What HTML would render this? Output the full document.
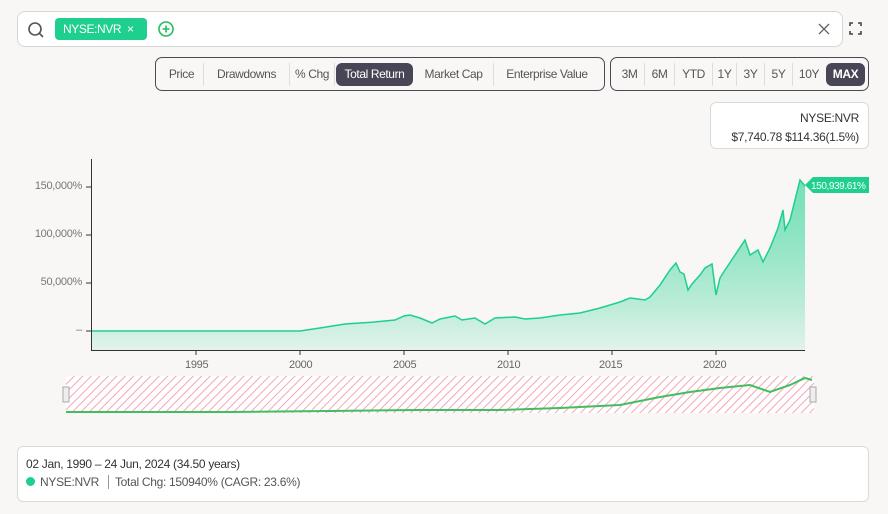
<!DOCTYPE html>
<html><head><meta charset="utf-8"><style>
*{box-sizing:border-box;margin:0;padding:0}
body{width:888px;height:514px;background:#f8f7f5;font-family:"Liberation Sans",sans-serif;position:relative;overflow:hidden;color:#333}
.search{position:absolute;left:17px;top:11px;width:826px;height:36px;background:#fff;border:1px solid #d8d6d2;border-radius:8px}
.chip{position:absolute;left:37px;top:6px;height:22px;width:92px;background:#1ecf8e;border-radius:4px;color:#fff;font-size:12px;letter-spacing:-.4px;line-height:22px;padding-left:8px;white-space:nowrap}
.grp{position:absolute;top:57px;height:34px;border:1px solid #4a4a55;border-radius:7px;font-size:12px;letter-spacing:-.4px;color:#555}
.grp span{position:absolute;top:5px;height:23px;line-height:23px;text-align:center;border-right:1px solid #ddd;white-space:nowrap}
.grp .on{background:#484656;color:#fff;border-radius:6px;border:none}
.tip{position:absolute;left:710px;top:102px;width:159px;height:47px;background:#fff;border:1px solid #dcdad6;border-radius:6px;text-align:right;padding:6px 9px;font-size:12px;letter-spacing:-.3px;line-height:19px;color:#333;white-space:nowrap}
.ylab{position:absolute;right:806px;font-size:11px;letter-spacing:-.3px;color:#777}
.xlab{position:absolute;top:359px;font-size:11px;color:#666;letter-spacing:-.3px}
.foot{position:absolute;left:17px;top:446px;width:852px;height:56px;background:#fff;border:1px solid #dcdad6;border-radius:6px;font-size:12px;letter-spacing:-.3px;padding:10px 8px;color:#333}
</style></head><body>
<div class="search">
<svg style="position:absolute;left:9px;top:9px" width="18" height="18" viewBox="0 0 18 18"><circle cx="8" cy="8" r="6" fill="none" stroke="#555" stroke-width="1.6"/><line x1="12.5" y1="12.5" x2="16" y2="16" stroke="#555" stroke-width="1.6"/></svg>
<div class="chip">NYSE:NVR &nbsp;×</div>
<svg style="position:absolute;left:139px;top:8px" width="18" height="18" viewBox="0 0 18 18"><circle cx="9" cy="9" r="7" fill="none" stroke="#1fbf5f" stroke-width="1.6"/><path d="M9 5.5v7M5.5 9h7" stroke="#1fbf5f" stroke-width="1.6"/></svg>
<svg style="position:absolute;right:12px;top:11px" width="12" height="12" viewBox="0 0 12 12"><path d="M1 1l10 10M11 1L1 11" stroke="#666" stroke-width="1.3"/></svg>
</div>
<svg style="position:absolute;left:849px;top:22px" width="13" height="13" viewBox="0 0 13 13"><path d="M1 4V1h3M9 1h3v3M12 9v3H9M4 12H1V9" fill="none" stroke="#444" stroke-width="1.6"/></svg>
<div class="grp" style="left:155px;width:450px">
<span style="left:4px;width:44px">Price</span><span style="left:48px;width:86px">Drawdowns</span><span style="left:134px;width:45px">% Chg</span><span class="on" style="left:180px;width:77px">Total Return</span><span style="left:258px;width:80px">Market Cap</span><span style="left:338px;width:106px;border:none">Enterprise Value</span></div>
<div class="grp" style="left:610px;width:259px">
<span style="left:4px;width:30px">3M</span><span style="left:34px;width:30px">6M</span><span style="left:64px;width:38px">YTD</span><span style="left:102px;width:24px">1Y</span><span style="left:126px;width:28px">3Y</span><span style="left:154px;width:28px">5Y</span><span style="left:182px;width:32px;border:none">10Y</span><span class="on" style="left:215px;width:39px;font-weight:bold">MAX</span></div>
<div class="tip">NYSE:NVR<br>$7,740.78 $114.36(1.5%)</div>
<div class="ylab" style="top:180px">150,000%</div>
<div class="ylab" style="top:228px">100,000%</div>
<div class="ylab" style="top:276px">50,000%</div>
<div class="ylab" style="top:324px">–</div>
<div class="xlab" style="left:185px">1995</div><div class="xlab" style="left:289px">2000</div><div class="xlab" style="left:393px">2005</div><div class="xlab" style="left:497px">2010</div><div class="xlab" style="left:599px">2015</div><div class="xlab" style="left:703px">2020</div>
<svg style="position:absolute;left:0;top:0" width="888" height="514">
<defs><linearGradient id="g" x1="0" y1="0" x2="0" y2="1"><stop offset="0" stop-color="#5dddab" stop-opacity=".85"/><stop offset="1" stop-color="#1ecf8e" stop-opacity=".1"/></linearGradient>
<pattern id="h" width="6" height="6" patternUnits="userSpaceOnUse" patternTransform="rotate(45)"><rect width="6" height="6" fill="#fff"/><line x1="0" y1="0" x2="0" y2="6" stroke="#f4a6b8" stroke-width="2"/></pattern></defs>
<path id="ln" d="M92 331L300 331L320 328L345 324L375 322L395 320L404 316L410 315L420 318L432 323L440 319L455 316L462 320L475 318L485 324L495 318L515 317L525 319L540 318L560 315L580 313L600 308L620 302L630 298L645 300L650 297L660 285L670 270L676 263L680 272L684 274L688 290L692 284L700 275L705 268L712 264L716 295L720 278L725 270L735 255L745 240L750 255L758 250L763 262L770 248L778 228L783 210L785 230L790 220L796 196L800 180L805 186L805 350L92 350Z" fill="url(#g)"/>
<path d="M92 331L300 331L320 328L345 324L375 322L395 320L404 316L410 315L420 318L432 323L440 319L455 316L462 320L475 318L485 324L495 318L515 317L525 319L540 318L560 315L580 313L600 308L620 302L630 298L645 300L650 297L660 285L670 270L676 263L680 272L684 274L688 290L692 284L700 275L705 268L712 264L716 295L720 278L725 270L735 255L745 240L750 255L758 250L763 262L770 248L778 228L783 210L785 230L790 220L796 196L800 180L805 186" fill="none" stroke="#1ecf8e" stroke-width="1.5"/>
<path d="M91.5 159V350.5H805" fill="none" stroke="#333" stroke-width="1"/>
<path d="M86 187h5M86 235h5M86 283h5M86 331h5M196 350v5M300 350v5M404 350v5M508 350v5M612 350v5M716 350v5" stroke="#333"/>
<path d="M805 185L813 177H869V193H813Z" fill="#1ecf8e"/>
<text x="811" y="189" font-size="10" letter-spacing="-0.4" fill="#fff" font-family="Liberation Sans">150,939.61%</text>
<rect x="66" y="376" width="748" height="37" fill="url(#h)"/>
<path d="M66 412L230 412L330 411L420 410L500 410L560 408L620 405L660 397L690 392L720 388L750 385L770 392L790 385L805 378L812 380" fill="none" stroke="#3fbf5f" stroke-width="2"/>
<rect x="63" y="387" width="6" height="15" fill="#eee" stroke="#aaa"/><rect x="810" y="387" width="6" height="15" fill="#eee" stroke="#aaa"/>
</svg>
<div class="foot">02 Jan, 1990 – 24 Jun, 2024 (34.50 years)<div style="margin-top:4px;color:#555"><span style="display:inline-block;width:9px;height:9px;border-radius:50%;background:#1ecf8e;margin-right:5px"></span>NYSE:NVR <span style="border-left:1px solid #999;margin:0 6px"></span>Total Chg: 150940% (CAGR: 23.6%)</div></div>
</body></html>
